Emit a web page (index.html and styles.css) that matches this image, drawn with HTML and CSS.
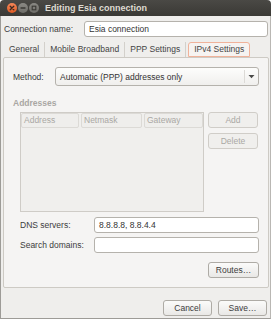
FILE: index.html
```html
<!doctype html>
<html>
<head>
	<meta charset="utf-8" />
	<title>Editing Esia connection</title>
	<link rel="stylesheet" href="styles.css">
</head>
<body>

	<div class="window">
		<div class="titlebar">
			<div class="controls">
				<span class="ctl ctlClose">
					<svg width="10" height="10" viewBox="0 0 10 10"><path d="M3.2 3.2 L6.8 6.8 M6.8 3.2 L3.2 6.8" stroke="#3a2a22" stroke-width="1.3" stroke-linecap="round"/></svg>
				</span>
				<span class="ctl">
					<svg width="10" height="10" viewBox="0 0 10 10"><path d="M3 5 H7" stroke="#3a3935" stroke-width="1.3" stroke-linecap="round"/></svg>
				</span>
				<span class="ctl">
					<svg width="10" height="10" viewBox="0 0 10 10"><rect x="3.2" y="3.2" width="3.6" height="3.6" fill="none" stroke="#3a3935" stroke-width="1.1"/></svg>
				</span>
			</div>
			<span class="title">Editing Esia connection</span>
		</div>

		<div class="dialog">
			<div class="nameRow">
				<span class="nameLabel">Connection name:</span>
				<div class="entry">Esia connection</div>
			</div>

			<div class="tabs">
				<span class="tab">General</span>
				<span class="tab">Mobile Broadband</span>
				<span class="tab">PPP Settings</span>
				<span class="tab tabActive">IPv4 Settings</span>
			</div>

			<div class="panel">
				<div class="methodRow">
					<span class="methodLabel">Method:</span>
					<div class="combo">
						<span class="comboText">Automatic (PPP) addresses only</span>
						<span class="comboArrow">
							<svg width="7" height="5" viewBox="0 0 7 5"><path d="M0.5 1 L6.5 1 L3.5 4.2 Z" fill="#4a4a48"/></svg>
						</span>
					</div>
				</div>

				<div class="sectionTitle">Addresses</div>

				<div class="addrBlock">
					<div class="addrTable">
						<div class="addrHead">
							<span class="headCell cellAddress">Address</span>
							<span class="headCell cellNetmask">Netmask</span>
							<span class="headCell cellGateway">Gateway</span>
						</div>
					</div>
					<div class="sideButtons">
						<button class="btn btnDisabled">Add</button>
						<button class="btn btnDisabled">Delete</button>
					</div>
				</div>

				<div class="fieldRow">
					<span class="fieldLabel">DNS servers:</span>
					<div class="entry entryField">8.8.8.8, 8.8.4.4</div>
				</div>
				<div class="fieldRow">
					<span class="fieldLabel">Search domains:</span>
					<div class="entry entryField"></div>
				</div>

				<div class="routesRow">
					<button class="btn btnRoutes">Routes…</button>
				</div>
			</div>

			<div class="actions">
				<button class="btn btnAction">Cancel</button>
				<button class="btn btnAction">Save…</button>
			</div>
		</div>
	</div>

</body>
</html>
```

FILE: styles.css
```css
html, body {
	margin: 0;
	padding: 0;
	background: #fff;
}
* {
	box-sizing: border-box;
}
body {
	font-family: "Liberation Sans", Arial, sans-serif;
	font-size: 8.5px;
	color: #3c3c3c;
}
.window {
	width: 271px;
	height: 319px;
	display: flex;
	flex-direction: column;
}

/* title bar */
.titlebar {
	height: 16px;
	flex: none;
	display: flex;
	align-items: center;
	background: linear-gradient(#4a4945, #3a3935);
	border-radius: 4px 4px 0 0;
}
.controls {
	display: flex;
	gap: 1px;
	padding: 0 0 0 7px;
	width: 45px;
}
.ctl {
	width: 10px;
	height: 10px;
	border-radius: 50%;
	background: linear-gradient(#8a8984, #6e6d68);
	display: flex;
}
.ctlClose {
	background: linear-gradient(#f4875a, #e05a22);
}
.title {
	font-size: 9px;
	font-weight: bold;
	color: #dfdbd2;
}

/* dialog body */
.dialog {
	flex: 1;
	background: #efeeec;
	border-left: 1px solid #9d9b97;
	border-right: 1px solid #b9b7b3;
	border-bottom: 1px solid #9d9b97;
	display: flex;
	flex-direction: column;
}
.nameRow {
	display: flex;
	align-items: center;
	margin: 5px 2px 0 3px;
}
.nameLabel {
	width: 80px;
	flex: none;
}
.entry {
	flex: 1;
	height: 16px;
	line-height: 14px;
	padding: 0 4px;
	background: #fff;
	border: 1px solid #b5b2ac;
	border-radius: 3px;
	color: #333;
	white-space: nowrap;
}

/* tabs */
.tabs {
	display: flex;
	height: 15px;
	margin: 5px 0 0 3px;
}
.tab {
	padding: 0 5px;
	line-height: 15px;
	border-right: 1px solid #d3d0cb;
	color: #444;
}
.tabActive {
	border: 1px solid #f0b29a;
	border-radius: 3px 3px 0 0;
	background: #f6f3f1;
	line-height: 13px;
	padding: 0 5px;
	margin-left: 2px;
}

/* panel */
.panel {
	height: 231px;
	margin: 0 1px 0 2px;
	background: #f5f4f3;
	border: 1px solid #cdcac4;
	border-radius: 2px;
	padding: 9px 9px 8px 9px;
	display: flex;
	flex-direction: column;
}
.methodRow {
	display: flex;
	align-items: center;
}
.methodLabel {
	width: 42px;
	flex: none;
}
.combo {
	flex: 1;
	height: 19px;
	display: flex;
	align-items: center;
	background: linear-gradient(#fdfdfc, #f0efed);
	border: 1px solid #b5b2ac;
	border-radius: 3px;
}
.comboText {
	flex: 1;
	padding-left: 4px;
	color: #333;
}
.comboArrow {
	width: 14px;
	height: 13px;
	border-left: 1px solid #dcdad6;
	display: flex;
	align-items: center;
	justify-content: center;
}
.sectionTitle {
	margin-top: 12px;
	height: 11px;
	line-height: 11px;
	font-weight: bold;
	color: #a9a7a3;
}
.addrBlock {
	display: flex;
	gap: 4px;
	margin: 3px 0 0 7px;
}
.addrTable {
	width: 184px;
	height: 100px;
	background: #f0efed;
	border: 1px solid #cfccc7;
	padding: 0;
}
.addrHead {
	display: flex;
	gap: 2px;
}
.headCell {
	height: 15px;
	line-height: 13px;
	padding: 0 2px;
	border: 1px solid #dcdad6;
	border-radius: 2px;
	background: #efeeec;
	color: #aaa8a4;
}
.cellAddress {
	width: 58px;
}
.cellNetmask {
	width: 61px;
}
.cellGateway {
	flex: 1;
}
.sideButtons {
	display: flex;
	flex-direction: column;
	gap: 5px;
	width: 50px;
}
.btn {
	font-family: inherit;
	font-size: 8.5px;
	height: 16px;
	padding: 0;
	margin: 0;
	color: #3c3c3c;
	background: linear-gradient(#fbfbfa, #e9e8e6);
	border: 1px solid #aeaba5;
	border-radius: 3px;
}
.btnDisabled {
	width: 50px;
	color: #aaa8a4;
	background: #f0efed;
	border-color: #d0cdc8;
}
.fieldRow {
	display: flex;
	align-items: center;
	margin: 5px 0 0 7px;
}
.fieldRow + .fieldRow {
	margin-top: 4px;
}
.fieldLabel {
	width: 74px;
	flex: none;
}
.routesRow {
	display: flex;
	justify-content: flex-end;
	margin-top: 9px;
}
.btnRoutes {
	width: 51px;
}

/* bottom buttons */
.actions {
	display: flex;
	justify-content: flex-end;
	gap: 6px;
	margin: 12px 3px 0 0;
}
.btnAction {
	width: 49px;
	height: 16px;
}
```
